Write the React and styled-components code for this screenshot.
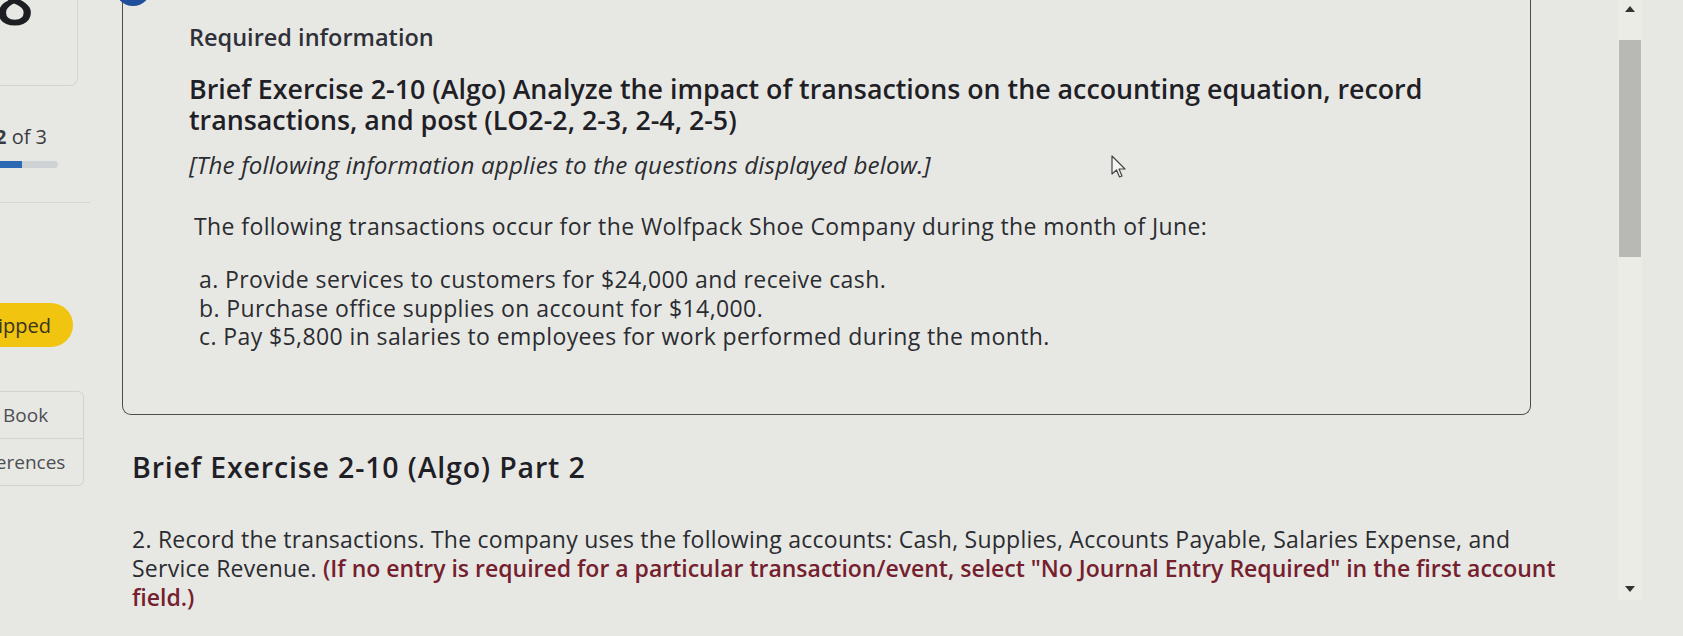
import React from "react";
import styled, { createGlobalStyle } from "styled-components";

const GlobalStyle = createGlobalStyle`
  html, body {
    margin: 0;
    padding: 0;
    background: #e7e8e4;
  }
  body {
    font-family: "Open Sans", Lato, sans-serif;
    color: #2b2c31;
  }
`;

const Page = styled.div`
  position: relative;
  display: flex;
  width: 1683px;
  height: 636px;
  overflow: hidden;
  background: #e7e8e4;
`;

const Sidebar = styled.aside`
  width: 122px;
  flex-shrink: 0;
  display: flex;
  flex-direction: column;
  overflow: hidden;
`;

const TopCard = styled.div`
  width: 77px;
  height: 85px;
  border: 1px solid #d3d4d0;
  border-top: none;
  border-left: none;
  border-radius: 0 0 8px 0;
  overflow: hidden;
`;

const BigDigit = styled.span`
  display: block;
  margin: -34px 0 0 -4px;
  font-size: 66px;
  font-weight: 600;
  line-height: 1;
  color: #1d1e22;
`;

const Counter = styled.div`
  margin: 38px 0 0 -5px;
  font-size: 20px;
  line-height: 26px;
  color: #3a3b40;
  font-weight: 700;

  span {
    font-weight: 400;
  }
`;

const Progress = styled.div`
  display: flex;
  margin-top: 11px;
  width: 58px;
  height: 7px;
  background: #cfd2d4;
  border-radius: 0 4px 4px 0;
`;

const ProgressFill = styled.div`
  width: ${(p) => p.$pct}%;
  background: #2d69b3;
`;

const Divider = styled.div`
  margin-top: 34px;
  width: 90px;
  height: 1px;
  background: #d6d7d3;
`;

const Pill = styled.div`
  margin: 100px 0 0 -30px;
  width: 103px;
  height: 44px;
  display: flex;
  align-items: center;
  justify-content: flex-end;
  padding-right: 22px;
  box-sizing: border-box;
  border-radius: 22px;
  background: #f1c40f;
  font-size: 20px;
  color: #3a3520;
  white-space: nowrap;
`;

const NavList = styled.div`
  margin-top: 44px;
  width: 83px;
  display: flex;
  flex-direction: column;
  border: 1px solid #d2d3cf;
  border-left: none;
  border-radius: 0 6px 6px 0;
  overflow: hidden;
`;

const NavItem = styled.div`
  height: 46px;
  display: flex;
  align-items: center;
  font-size: 19px;
  color: #4d4e52;
  border-top: ${(p) => (p.$first ? "none" : "1px solid #d2d3cf")};
  padding-left: ${(p) => p.$indent}px;
  white-space: nowrap;
`;

const Main = styled.main`
  flex: 1;
  display: flex;
  flex-direction: column;
  min-width: 0;
`;

const Panel = styled.section`
  position: relative;
  margin-right: 87px;
  height: 415px;
  box-sizing: border-box;
  padding-left: 66px;
  border: 1.5px solid #4c4d4f;
  border-top: none;
  border-radius: 0 0 9px 9px;
`;

const Badge = styled.div`
  position: absolute;
  left: -8px;
  top: -30px;
  width: 36px;
  height: 36px;
  border-radius: 50%;
  background: #1f4e9b;
`;

const Required = styled.h3`
  margin: 23px 0 0;
  font-size: 23.5px;
  line-height: 28px;
  font-weight: 600;
  color: #2f3038;
`;

const Title = styled.h2`
  margin: 22px 0 0;
  font-size: 26.8px;
  line-height: 31px;
  font-weight: 600;
  color: #1f2026;
  white-space: nowrap;
`;

const Note = styled.p`
  margin: 16px 0 0;
  font-size: 24.2px;
  line-height: 28px;
  letter-spacing: 0.15px;
  font-style: italic;
  color: #2b2c31;
`;

const Intro = styled.p`
  margin: 33px 0 0 5px;
  font-size: 23px;
  line-height: 28px;
  letter-spacing: 0.4px;
  color: #2b2c31;
`;

const List = styled.ul`
  list-style: none;
  margin: 25px 0 0;
  padding-left: 10px;
`;

const Item = styled.li`
  font-size: 23px;
  line-height: 28.5px;
  letter-spacing: 0.4px;
  color: #2b2c31;
`;

const PartTitle = styled.h2`
  margin: 36px 0 0 10px;
  font-size: 28.5px;
  line-height: 32px;
  font-weight: 600;
  letter-spacing: 0.85px;
  color: #1f2026;
`;

const Body = styled.p`
  margin: 42px 0 0 10px;
  font-size: 23px;
  line-height: 29px;
  letter-spacing: 0.25px;
  color: #2b2c31;
  white-space: nowrap;
`;

const Warn = styled.strong`
  color: #75202e;
  font-weight: 600;
  letter-spacing: 0;
`;

const Scrollbar = styled.div`
  width: 24px;
  flex-shrink: 0;
  margin-right: 41px;
  height: 600px;
  display: flex;
  flex-direction: column;
  align-items: center;
  background: #ecece6;
`;

const Arrow = styled.div`
  width: 0;
  height: 0;
  margin: ${(p) => (p.$up ? "6px 0 0" : "auto 0 8px")};
  border-left: 5px solid transparent;
  border-right: 5px solid transparent;
  ${(p) =>
    p.$up ? "border-bottom: 6px solid #333;" : "border-top: 6px solid #333;"}
`;

const Thumb = styled.div`
  margin-top: 28px;
  width: 22px;
  height: 217px;
  background: #b8b9b4;
`;

const Cursor = styled.svg`
  position: absolute;
  left: 1111px;
  top: 155px;
`;

export default function App() {
  return (
    <>
      <GlobalStyle />
      <Page>
        <Sidebar>
          <TopCard>
            <BigDigit>8</BigDigit>
          </TopCard>
          <Counter>
            2 <span>of 3</span>
          </Counter>
          <Progress>
            <ProgressFill $pct={38} />
          </Progress>
          <Divider />
          <Pill>Skipped</Pill>
          <NavList>
            <NavItem $first $indent={3}>
              Book
            </NavItem>
            <NavItem $indent={0}>
              <span style={{ marginLeft: -33 }}>References</span>
            </NavItem>
          </NavList>
        </Sidebar>
        <Main>
          <Panel>
            <Badge />
            <Required>Required information</Required>
            <Title>
              Brief Exercise 2-10 (Algo) Analyze the impact of transactions on
              the accounting equation, record
              <br />
              transactions, and post (LO2-2, 2-3, 2-4, 2-5)
            </Title>
            <Note>
              [The following information applies to the questions displayed
              below.]
            </Note>
            <Intro>
              The following transactions occur for the Wolfpack Shoe Company
              during the month of June:
            </Intro>
            <List>
              <Item>a. Provide services to customers for $24,000 and receive cash.</Item>
              <Item>b. Purchase office supplies on account for $14,000.</Item>
              <Item>c. Pay $5,800 in salaries to employees for work performed during the month.</Item>
            </List>
          </Panel>
          <PartTitle>Brief Exercise 2-10 (Algo) Part 2</PartTitle>
          <Body>
            2. Record the transactions. The company uses the following
            accounts: Cash, Supplies, Accounts Payable, Salaries Expense, and
            <br />
            Service Revenue.{" "}
            <Warn>
              (If no entry is required for a particular transaction/event,
              select "No Journal Entry Required" in the first account
              <br />
              field.)
            </Warn>
          </Body>
        </Main>
        <Scrollbar>
          <Arrow $up />
          <Thumb />
          <Arrow />
        </Scrollbar>
        <Cursor width="16" height="24" viewBox="0 0 16 24">
          <path
            d="M1 1 L1 19 L5.5 15 L8.5 22 L11 21 L8 14 L14 14 Z"
            fill="#f4f4f2"
            stroke="#444"
            strokeWidth="1.2"
            strokeLinejoin="round"
          />
        </Cursor>
      </Page>
    </>
  );
}
